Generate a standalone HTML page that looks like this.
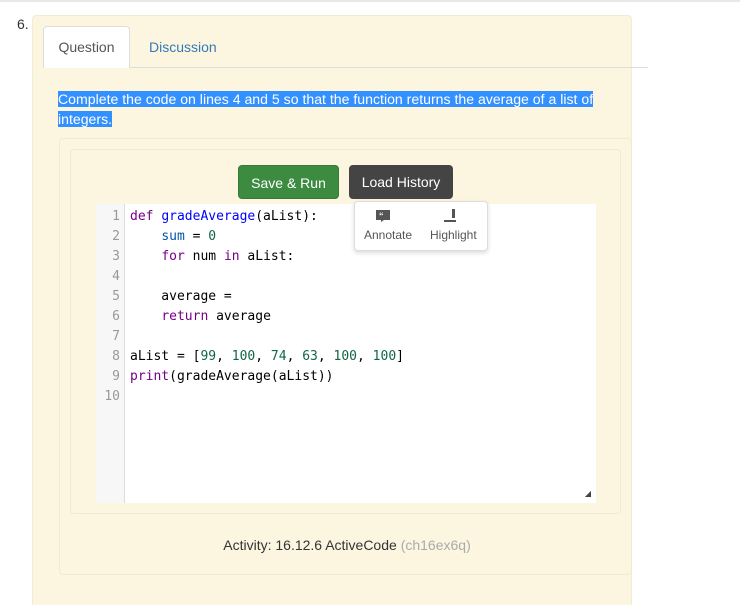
<!DOCTYPE html>
<html style="height:605px;overflow:hidden"><head><style>
body{margin:0;width:740px;height:605px;background:#fff;font-family:"Liberation Sans",sans-serif;position:relative;overflow:hidden}
.topline{position:absolute;left:0;top:0;width:740px;height:2px;background:#e8e8e8}
.num{position:absolute;left:17px;top:16px;font-size:14px;color:#333}
.outer{position:absolute;left:32px;top:15px;width:598px;height:600px;background:#fcf6e1;border:1px solid #f3ecd4;border-radius:4px}
.tabline{position:absolute;left:43px;top:67px;width:605px;height:1px;background:#ddd}
.tab1{position:absolute;left:43px;top:26px;width:87px;height:42px;background:#fff;border:1px solid #ddd;border-bottom:none;border-radius:4px 4px 0 0;font-size:14px;color:#555;text-align:center;line-height:41px;box-sizing:border-box}
.tab2{position:absolute;left:149px;top:39px;font-size:14px;color:#337ab7}
.sel{position:absolute;left:58px;top:89px;font-size:14.1px;line-height:20px;color:#fff}
.sel span{background:#3390ff}
.box1{position:absolute;left:59px;top:138px;width:573px;height:437px;border:1px solid #f1e9d0;border-radius:4px;box-sizing:border-box}
.box2{position:absolute;left:70px;top:149px;width:551px;height:365px;border:1px solid #f1e9d0;border-radius:4px;box-sizing:border-box}
.btn{position:absolute;top:165px;height:34px;border-radius:4px;color:#fff;font-size:14px;line-height:34px;text-align:center}
.b1{left:238px;width:101px;background:#3d8b40;border:1px solid #357a38;box-sizing:border-box}
.b2{left:349px;width:104px;background:#444;box-sizing:border-box}
.ed{position:absolute;left:96px;top:204px;width:500px;height:299px;background:#fff}
.gut{position:absolute;left:0;top:0;width:28px;height:299px;background:#f7f7f7;border-right:1px solid #ddd}
.ln{position:absolute;left:0;width:24px;text-align:right;color:#999;font:13px "DejaVu Sans Mono",monospace}
.cl{position:absolute;left:34px;font:13px "DejaVu Sans Mono",monospace;color:#000;white-space:pre}
.k{color:#708}.d{color:#00f}.v{color:#05a}.n{color:#164}.b{color:#05a}
.pop{position:absolute;left:354px;top:201px;width:132px;height:48px;background:#fff;border:1px solid #ddd;border-radius:4px;box-shadow:0 2px 5px rgba(0,0,0,.15);font-size:12px;color:#555}
.act{position:absolute;left:0;width:694px;top:537px;text-align:center;font-size:14px;color:#333}
</style></head><body>
<div class="topline"></div>
<div class="num">6.</div>
<div class="outer"></div>
<div class="tabline"></div>
<div class="tab1">Question</div>
<div class="tab2">Discussion</div>
<div class="sel"><span>Complete the code on lines 4 and 5 so that the function returns the average of a list of</span><br><span>integers.</span></div>
<div class="box1"></div>
<div class="box2"></div>
<div class="btn b1">Save &amp; Run</div>
<div class="btn b2">Load History</div>
<div class="ed"><div class="gut"></div>
<div class="ln" style="top:5px">1</div><div class="ln" style="top:25px">2</div><div class="ln" style="top:45px">3</div><div class="ln" style="top:65px">4</div><div class="ln" style="top:85px">5</div><div class="ln" style="top:105px">6</div><div class="ln" style="top:125px">7</div><div class="ln" style="top:145px">8</div><div class="ln" style="top:165px">9</div><div class="ln" style="top:185px">10</div>
<div class="cl" style="top:5px"><span class="k">def</span> <span class="d">gradeAverage</span>(aList):</div>
<div class="cl" style="top:25px">    <span class="v">sum</span> = <span class="n">0</span></div>
<div class="cl" style="top:45px">    <span class="k">for</span> num <span class="k">in</span> aList:</div>
<div class="cl" style="top:85px">    average =</div>
<div class="cl" style="top:105px">    <span class="k">return</span> average</div>
<div class="cl" style="top:145px">aList = [<span class="n">99</span>, <span class="n">100</span>, <span class="n">74</span>, <span class="n">63</span>, <span class="n">100</span>, <span class="n">100</span>]</div>
<div class="cl" style="top:165px"><span class="k">print</span>(gradeAverage(aList))</div>
<div style="position:absolute;right:5px;bottom:5px;font-size:8px;color:#444">◢</div>
</div>
<div class="pop">
<svg style="position:absolute;left:21px;top:8px" width="14" height="12"><path d="M0 0h14v10H8l-3 2V10H0z" fill="#555"/><text x="3" y="9" font-size="9" fill="#fff" font-family="Liberation Sans" font-weight="bold">“</text></svg>
<div style="position:absolute;left:9px;top:26px">Annotate</div>
<svg style="position:absolute;left:89px;top:7px" width="14" height="14"><rect x="8" y="0" width="3" height="9" fill="#555"/><rect x="0" y="11" width="12" height="2" fill="#555"/></svg>
<div style="position:absolute;left:75px;top:26px">Highlight</div>
</div>
<div class="act">Activity: 16.12.6 ActiveCode <span style="color:#aaa">(ch16ex6q)</span></div>
</body></html>
